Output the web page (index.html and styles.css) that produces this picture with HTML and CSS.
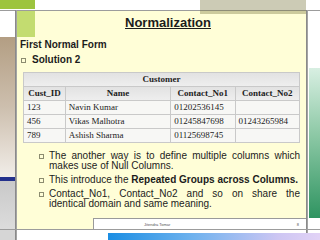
FILE: index.html
```html
<!DOCTYPE html>
<html lang="en">

<head>
    <meta charset="UTF-8">
    <meta name="viewport" content="width=device-width, initial-scale=1.0">
    <title>Normalization</title>
    <link rel="stylesheet" href="styles.css">
</head>

<body>
    <div class="slide">
        <div class="topBar">
            <div class="topGreen"></div>
            <div class="topTab"></div>
        </div>
        <div class="hLine lineTop"></div>

        <div class="leftStrip">
            <div class="leftWhite"></div>
            <div class="leftBrown"></div>
            <div class="leftBlue"></div>
            <div class="leftGray"></div>
        </div>
        <div class="vLine lineLeft"></div>

        <div class="content">
            <div class="cornerSquare"></div>
            <h1 class="title">Normalization</h1>
            <p class="heading">First Normal Form</p>
            <p class="subHeading"><span class="box"></span>Solution 2</p>

            <table class="custTable">
                <tr class="headRow">
                    <th colspan="4">Customer</th>
                </tr>
                <tr class="headRow">
                    <th class="colId">Cust_ID</th>
                    <th class="colName">Name</th>
                    <th class="colNo">Contact_No1</th>
                    <th class="colNo">Contact_No2</th>
                </tr>
                <tr>
                    <td>123</td>
                    <td>Navin Kumar</td>
                    <td>01202536145</td>
                    <td></td>
                </tr>
                <tr>
                    <td>456</td>
                    <td>Vikas Malhotra</td>
                    <td>01245847698</td>
                    <td>01243265984</td>
                </tr>
                <tr>
                    <td>789</td>
                    <td>Ashish Sharma</td>
                    <td>01125698745</td>
                    <td></td>
                </tr>
            </table>

            <ul class="points">
                <li><span class="box"></span><span class="pointText">The another way is to define multiple columns which makes use of Null Columns.</span></li>
                <li><span class="box"></span><span class="pointText">This introduce the <b>Repeated Groups across Columns.</b></span></li>
                <li><span class="box"></span><span class="pointText">Contact_No1, Contact_No2 and so on share the identical domain and same meaning.</span></li>
            </ul>

            <div class="footer">
                <span class="author">Jitendra Tomar</span>
                <span class="pageNo">8</span>
            </div>
        </div>

        <div class="vLine lineRight"></div>
        <div class="rightStrip">
            <div class="rightGreen"></div>
        </div>

        <div class="hLine lineBottom"></div>
        <div class="bottomBar">
            <div class="bottomGray"></div>
            <div class="bottomBlue"></div>
        </div>
    </div>
</body>

</html>
```

FILE: styles.css
```css
html,
body {
    margin: 0;
    padding: 0;
}

body {
    width: 320px;
    height: 240px;
    overflow: hidden;
    background-color: white;
    font-family: "Liberation Sans", Arial, sans-serif;
    color: #1c1c1c;
}

.slide {
    display: grid;
    grid-template-columns: 15px 2px 289px 2px 12px;
    grid-template-rows: 10px 1px 218px 1px 10px;
    width: 320px;
    height: 240px;
}

/* top decoration */
.topBar {
    grid-column: 1 / 6;
    grid-row: 1;
    display: flex;
    position: relative;
    z-index: 2;
}

.topGreen {
    width: 35px;
    height: 9px;
    background-color: #9dc43e;
}

.topTab {
    width: 106px;
    height: 14px;
    margin-left: auto;
    margin-right: 14px;
    background-color: rgba(120, 118, 60, 0.38);
}

.hLine {
    grid-column: 1 / 6;
    background-color: #9c9c9c;
}

.lineTop {
    grid-row: 2;
}

.lineBottom {
    grid-row: 4;
}

.vLine {
    grid-row: 2 / 6;
    background-color: #a4a4a4;
    border-left: 1px solid #8a8a8a;
    box-sizing: border-box;
}

.lineLeft {
    grid-column: 2;
}

.lineRight {
    grid-column: 4;
}

/* left strip */
.leftStrip {
    grid-column: 1;
    grid-row: 3;
    display: flex;
    flex-direction: column;
}

.leftWhite {
    height: 26px;
    background-color: white;
}

.leftBrown {
    height: 140px;
    background: linear-gradient(#b39e83, #cdbfae 50%, #f1ede8);
}

.leftBlue {
    height: 4px;
    background-color: #23318c;
}

.leftGray {
    flex: 1;
    background: linear-gradient(#c9c9c9, #dcdcdc);
}

/* right strip */
.rightStrip {
    grid-column: 5;
    grid-row: 3;
}

.rightGreen {
    margin-top: 57px;
    margin-left: 1px;
    height: 150px;
    background: linear-gradient(#d8efe2, #8cc8a5 45%, #2f9461);
}

/* bottom strip */
.bottomBar {
    grid-column: 1 / 6;
    grid-row: 5;
    display: flex;
}

.bottomGray {
    width: 15px;
    background-color: #d6d6d6;
}

.bottomBlue {
    margin-left: 93px;
    margin-top: 3px;
    flex: 1;
    background: linear-gradient(to right, #1b8ee3, #6fb2ee 40%, #cdc6f3 80%, #e2d3f6);
}

/* slide content */
.content {
    grid-column: 3;
    grid-row: 3;
    position: relative;
    display: flex;
    flex-direction: column;
    background-color: #fffed7;
}

.cornerSquare {
    position: absolute;
    left: 0;
    top: 0;
    width: 18px;
    height: 26px;
    background-color: #c3dc70;
}

.title {
    margin: 4px 0 0 13px;
    font-size: 13px;
    line-height: 15px;
    text-align: center;
    text-decoration: underline;
    font-weight: bold;
}

.heading {
    margin: 9px 0 0 3px;
    font-size: 10px;
    line-height: 12px;
    font-weight: bold;
}

.subHeading {
    margin: 3px 0 0 4px;
    font-size: 10px;
    line-height: 12px;
    font-weight: bold;
    display: flex;
    align-items: center;
}

.box {
    flex: none;
    width: 3px;
    height: 3px;
    border: 1px solid #8c8c70;
    margin-right: 5px;
}

.subHeading .box {
    margin-right: 6px;
}

/* table */
.custTable {
    margin: 6px 0 0 6px;
    width: 277px;
    border-collapse: collapse;
    font-family: "Liberation Serif", "Times New Roman", serif;
    font-size: 9px;
    background-color: #f7f7f5;
}

.custTable th,
.custTable td {
    height: 13px;
    padding: 0 3px;
    border: 1px solid #c9c9c9;
    line-height: 13px;
    white-space: nowrap;
}

.custTable th {
    text-align: center;
    font-weight: bold;
}

.custTable td {
    text-align: left;
}

.headRow {
    background: linear-gradient(#e2e2e2, #efefef);
}

.colId {
    width: 35px;
}

.colName {
    width: 102px;
}

.colNo {
    width: 58px;
}

/* bullet points */
.points {
    list-style: none;
    margin: 8px 6px 0 22px;
    padding: 0;
    font-size: 10px;
    line-height: 10px;
}

.points li {
    display: flex;
    align-items: flex-start;
    margin-bottom: 4px;
}

.points .box {
    margin-top: 3px;
    margin-right: 5px;
}

.pointText {
    flex: 1;
    text-align: justify;
}

/* footer */
.footer {
    margin: auto 0 0 76px;
    height: 11px;
    border: 1px solid #9a9a9a;
    border-right: none;
    border-bottom: none;
    box-sizing: border-box;
    display: flex;
    align-items: center;
    background-color: white;
    font-size: 4px;
    color: #555;
}

.author {
    margin-left: 50px;
    flex: 1;
}

.pageNo {
    margin-right: 7px;
}
```
